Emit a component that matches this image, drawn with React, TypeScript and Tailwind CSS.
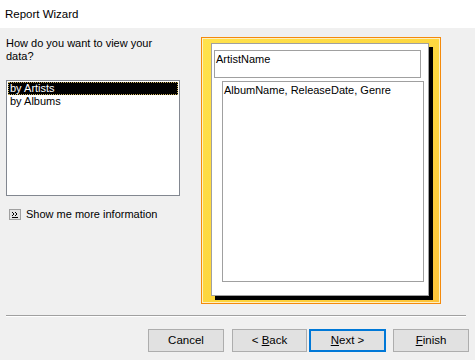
import React from "react";

const font = { fontFamily: '"Segoe UI", "Liberation Sans", Arial, sans-serif' };

function Btn({ children, w, focus }: { children: React.ReactNode; w: string; focus?: boolean }) {
  return (
    <button
      className={
        focus
          ? "h-[23px] bg-[#e1e1e1] border-2 border-[#0078d7] text-[11.5px] leading-none text-black " + w
          : "h-[23px] bg-[#e1e1e1] border border-[#adadad] text-[11.5px] leading-none text-black " + w
      }
      style={font}
    >
      {children}
    </button>
  );
}

export default function App() {
  return (
    <div className="w-[475px] h-[360px] bg-[#f0f0f0] text-[11px] text-black overflow-hidden flex flex-col" style={font}>
      <div className="h-[28px] bg-white flex items-center pl-[5px] text-[11.5px] leading-none pt-px">Report Wizard</div>
      <div className="flex h-[280px]">
        <div className="w-[195px] pl-[6px] pt-[9px] flex flex-col">
          <div className="leading-[13px] w-[170px] text-[11px]">How do you want to view your data?</div>
          <div className="mt-[17px] w-[174px] h-[116px] border border-[#828790] bg-white p-px">
            <div className="h-[13px] bg-black text-white leading-[13px] pl-[2px] outline-dotted outline-1 outline-[#c8b060] -outline-offset-1">by Artists</div>
            <div className="h-[13px] leading-[13px] pl-[2px]">by Albums</div>
          </div>
          <div className="mt-[11px] flex items-center pl-[3px]">
            <div className="w-[12px] h-[11px] border border-[#a0a0a0] bg-[#e1e1e1] flex items-center justify-center">
              <svg width="8" height="7" viewBox="0 0 8 7">
                <path d="M1 1 L3 3 L1 5 M4 1 L6 3 L4 5" stroke="#000" strokeWidth="1" fill="none" />
                <path d="M1 6.5 H7" stroke="#000" strokeWidth="1" />
              </svg>
            </div>
            <span className="ml-[5px] leading-[14px] text-[11px]">Show me more information</span>
          </div>
        </div>
        <div className="pl-[6px] pt-[9px]">
          <div className="w-[240px] h-[267px] border border-[#f48a0c] p-px bg-[#fff0c0]">
            <div className="w-full h-full bg-[linear-gradient(135deg,#ffe24c_0%,#fdd63e_55%,#fdc43a_100%)] pl-[8px] pt-[4px]">
              <div className="w-[218px] h-[253px] bg-white border border-[#a0a0a0] shadow-[4px_4px_0_0_#000] pt-[6px]">
                <div className="ml-[2px] w-[207px] h-[28px] border border-[#a0a0a0] pl-[1px] leading-[16px]">ArtistName</div>
                <div className="ml-[10px] mt-[3px] w-[202px] h-[201px] border border-[#a0a0a0] pl-[1px] pt-[1px] leading-[14px]">AlbumName, ReleaseDate, Genre</div>
              </div>
            </div>
          </div>
        </div>
      </div>
      <div className="mt-[7px] ml-[6px] w-[460px] h-[2px] border-t border-[#a0a0a0] border-b border-b-white"></div>
      <div className="flex pl-[148px] pt-[12px]">
        <Btn w="w-[76px]">Cancel</Btn>
        <div className="w-[8px]" />
        <Btn w="w-[75px]">&lt; <u>B</u>ack</Btn>
        <div className="w-[2px]" />
        <Btn w="w-[77px]" focus><u>N</u>ext &gt;</Btn>
        <div className="w-[7px]" />
        <Btn w="w-[76px]"><u>F</u>inish</Btn>
      </div>
    </div>
  );
}
